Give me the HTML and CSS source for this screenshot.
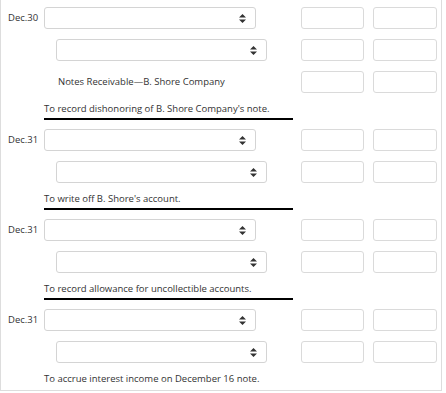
FILE: index.html
```html
<!DOCTYPE html>
<html>
<head>
  <meta charset="UTF-8" />
  <title>Journal Entries</title>
  <link rel="stylesheet" href="styles.css">
</head>
<body>
  <div class="journal">

    <!-- Dec 30 entry -->
    <div class="entry">
      <div class="row">
        <div class="date">Dec.30</div>
        <div class="account">
          <div class="select"><svg class="arrows" width="7" height="9" viewBox="0 0 7 9"><path d="M3.5 0 L7 3.5 H0 Z M0 5.5 H7 L3.5 9 Z" /></svg></div>
        </div>
        <div class="amount"></div>
        <div class="amount"></div>
      </div>
      <div class="row">
        <div class="date"></div>
        <div class="account indent">
          <div class="select"><svg class="arrows" width="7" height="9" viewBox="0 0 7 9"><path d="M3.5 0 L7 3.5 H0 Z M0 5.5 H7 L3.5 9 Z" /></svg></div>
        </div>
        <div class="amount"></div>
        <div class="amount"></div>
      </div>
      <div class="row">
        <div class="date"></div>
        <div class="account indent">
          <span class="fixed-account">Notes Receivable—B. Shore Company</span>
        </div>
        <div class="amount"></div>
        <div class="amount"></div>
      </div>
      <div class="explain">To record dishonoring of B. Shore Company's note.</div>
    </div>

    <!-- Dec 31 write off -->
    <div class="entry">
      <div class="row">
        <div class="date">Dec.31</div>
        <div class="account">
          <div class="select"><svg class="arrows" width="7" height="9" viewBox="0 0 7 9"><path d="M3.5 0 L7 3.5 H0 Z M0 5.5 H7 L3.5 9 Z" /></svg></div>
        </div>
        <div class="amount"></div>
        <div class="amount"></div>
      </div>
      <div class="row">
        <div class="date"></div>
        <div class="account indent">
          <div class="select"><svg class="arrows" width="7" height="9" viewBox="0 0 7 9"><path d="M3.5 0 L7 3.5 H0 Z M0 5.5 H7 L3.5 9 Z" /></svg></div>
        </div>
        <div class="amount"></div>
        <div class="amount"></div>
      </div>
      <div class="explain">To write off B. Shore's account.</div>
    </div>

    <!-- Dec 31 allowance -->
    <div class="entry">
      <div class="row">
        <div class="date">Dec.31</div>
        <div class="account">
          <div class="select"><svg class="arrows" width="7" height="9" viewBox="0 0 7 9"><path d="M3.5 0 L7 3.5 H0 Z M0 5.5 H7 L3.5 9 Z" /></svg></div>
        </div>
        <div class="amount"></div>
        <div class="amount"></div>
      </div>
      <div class="row">
        <div class="date"></div>
        <div class="account indent">
          <div class="select"><svg class="arrows" width="7" height="9" viewBox="0 0 7 9"><path d="M3.5 0 L7 3.5 H0 Z M0 5.5 H7 L3.5 9 Z" /></svg></div>
        </div>
        <div class="amount"></div>
        <div class="amount"></div>
      </div>
      <div class="explain">To record allowance for uncollectible accounts.</div>
    </div>

    <!-- Dec 31 interest -->
    <div class="entry">
      <div class="row">
        <div class="date">Dec.31</div>
        <div class="account">
          <div class="select"><svg class="arrows" width="7" height="9" viewBox="0 0 7 9"><path d="M3.5 0 L7 3.5 H0 Z M0 5.5 H7 L3.5 9 Z" /></svg></div>
        </div>
        <div class="amount"></div>
        <div class="amount"></div>
      </div>
      <div class="row">
        <div class="date"></div>
        <div class="account indent">
          <div class="select"><svg class="arrows" width="7" height="9" viewBox="0 0 7 9"><path d="M3.5 0 L7 3.5 H0 Z M0 5.5 H7 L3.5 9 Z" /></svg></div>
        </div>
        <div class="amount"></div>
        <div class="amount"></div>
      </div>
      <div class="explain last">To accrue interest income on December 16 note.</div>
    </div>

  </div>
</body>
</html>
```

FILE: styles.css
```css
body {
  margin: 0;
  background-color: #fff;
  font-family: "Open Sans", "Liberation Sans", sans-serif;
  font-size: 9.5px;
  color: #333;
}

.journal {
  width: 437px;
  padding: 7px 3px 5px 0;
  border: 1px solid #ddd;
  border-top: none;
}

.entry {
  display: flex;
  flex-direction: column;
  gap: 10px;
  margin-bottom: 9px;
}

.entry:last-child {
  margin-bottom: 0;
}

.row {
  display: flex;
  align-items: center;
  height: 22px;
}

.date {
  width: 43px;
  padding-left: 7px;
  box-sizing: border-box;
  line-height: 12px;
}

.account {
  width: 257px;
}

.account.indent {
  padding-left: 12px;
  box-sizing: border-box;
}

.select {
  width: 212px;
  height: 22px;
  box-sizing: border-box;
  border: 1px solid #d4d4d4;
  border-radius: 3px;
  display: flex;
  align-items: center;
  justify-content: flex-end;
  padding-right: 9px;
}

.indent .select {
  width: 211px;
}

.arrows {
  fill: #333;
}

.fixed-account {
  display: block;
  padding-left: 2px;
  line-height: 12px;
}

.amount {
  width: 63px;
  height: 22px;
  box-sizing: border-box;
  border: 1px solid #dadada;
  border-radius: 3px;
}

.amount + .amount {
  width: 64px;
  margin-left: 9px;
}

.explain {
  margin-left: 43px;
  width: 249px;
  line-height: 12px;
  padding-bottom: 3px;
  border-bottom: 2px solid #000;
}

.explain.last {
  border-bottom: none;
  padding-bottom: 0;
}
```
